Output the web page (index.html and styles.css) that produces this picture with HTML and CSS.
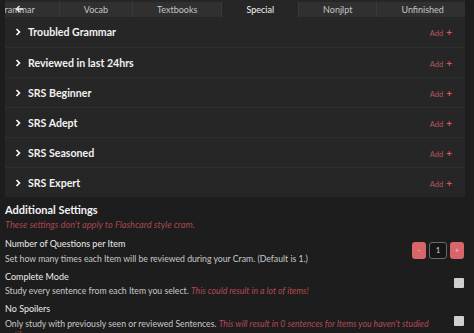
FILE: index.html
```html
<!DOCTYPE html>
<html>
<head>
<meta charset="utf-8">
<link rel="stylesheet" href="styles.css">
</head>
<body>
<div class="tabs">
  <div class="tab-track">
    <div class="tab">Grammar</div>
    <div class="tab">Vocab</div>
    <div class="tab">Textbooks</div>
    <div class="tab active">Special</div>
    <div class="tab">Nonjlpt</div>
    <div class="tab">Unfinished</div>
  </div>
  <span class="scroll-arrow">
    <svg width="9" height="8" viewBox="0 0 9 8"><path d="M8 4H1.5M4.5 1L1.5 4L4.5 7" fill="none" stroke="#e8e8e8" stroke-width="1.4"/></svg>
  </span>
</div>
<div class="panel">
  <div class="row"><svg class="chev" width="6" height="8" viewBox="0 0 6 8"><path d="M1.5 1L4.5 4L1.5 7" fill="none" stroke="#fff" stroke-width="1.6"/></svg><span class="label">Troubled Grammar</span><span class="add">Add <b>+</b></span></div>
  <div class="row"><svg class="chev" width="6" height="8" viewBox="0 0 6 8"><path d="M1.5 1L4.5 4L1.5 7" fill="none" stroke="#fff" stroke-width="1.6"/></svg><span class="label">Reviewed in last 24hrs</span><span class="add">Add <b>+</b></span></div>
  <div class="row"><svg class="chev" width="6" height="8" viewBox="0 0 6 8"><path d="M1.5 1L4.5 4L1.5 7" fill="none" stroke="#fff" stroke-width="1.6"/></svg><span class="label">SRS Beginner</span><span class="add">Add <b>+</b></span></div>
  <div class="row"><svg class="chev" width="6" height="8" viewBox="0 0 6 8"><path d="M1.5 1L4.5 4L1.5 7" fill="none" stroke="#fff" stroke-width="1.6"/></svg><span class="label">SRS Adept</span><span class="add">Add <b>+</b></span></div>
  <div class="row"><svg class="chev" width="6" height="8" viewBox="0 0 6 8"><path d="M1.5 1L4.5 4L1.5 7" fill="none" stroke="#fff" stroke-width="1.6"/></svg><span class="label">SRS Seasoned</span><span class="add">Add <b>+</b></span></div>
  <div class="row"><svg class="chev" width="6" height="8" viewBox="0 0 6 8"><path d="M1.5 1L4.5 4L1.5 7" fill="none" stroke="#fff" stroke-width="1.6"/></svg><span class="label">SRS Expert</span><span class="add">Add <b>+</b></span></div>
</div>
<div class="settings">
  <h2 class="settings-title">Additional Settings</h2>
  <p class="warn">These settings don't apply to Flashcard style cram.</p>
  <div class="setting">
    <div class="setting-text">
      <div class="setting-name">Number of Questions per Item</div>
      <div class="setting-desc">Set how many times each Item will be reviewed during your Cram. (Default is 1.)</div>
    </div>
    <div class="counter">
      <span class="cbtn">-</span>
      <span class="cval">1</span>
      <span class="cbtn">+</span>
    </div>
  </div>
  <div class="setting">
    <div class="setting-text">
      <div class="setting-name">Complete Mode</div>
      <div class="setting-desc">Study every sentence from each Item you select. <em>This could result in a lot of items!</em></div>
    </div>
    <span class="check"></span>
  </div>
  <div class="setting">
    <div class="setting-text">
      <div class="setting-name">No Spoilers</div>
      <div class="setting-desc">Only study with previously seen or reviewed Sentences. <em>This will result in 0 sentences for Items you haven't studied until</em></div>
    </div>
    <span class="check"></span>
  </div>
</div>
</body>
</html>
```
FILE: styles.css
```css
html, body {
  margin: 0;
  padding: 0;
}
body {
  background: #1d1d1d;
  font-family: Lato, "Liberation Sans", sans-serif;
  color: #e6e6e6;
  width: 474px;
  height: 333px;
  overflow: hidden;
}
.tabs {
  position: relative;
  margin-left: 5px;
  width: 460px;
  height: 17px;
  padding-top: 2px;
  box-sizing: border-box;
  overflow: hidden;
  background: #262626;
}
.tab-track {
  display: flex;
  margin-left: -31px;
}
.tab {
  flex: none;
  padding: 0 24px;
  height: 15px;
  line-height: 15px;
  font-size: 9px;
  color: #c4c4c4;
  background: #303030;
  border-right: 1px solid #3a3a3a;
}
.tab.active {
  background: #262626;
  color: #f4f4f4;
}
.scroll-arrow {
  position: absolute;
  left: 10px;
  top: 5px;
  line-height: 0;
}
.panel {
  margin-left: 5px;
  width: 460px;
  background: #262626;
}
.row {
  display: flex;
  align-items: center;
  height: 30px;
  box-sizing: border-box;
  border-top: 1px solid #2e2e2e;
  padding: 0 13px 0 10px;
}
.row:first-child {
  border-top: none;
}
.chev {
  flex: none;
  margin-right: 7px;
}
.label {
  flex: 1;
  font-size: 10.6px;
  font-weight: 700;
  color: #f2f2f2;
}
.add {
  font-size: 7.5px;
  color: #b4585c;
}
.add b {
  font-size: 10px;
  color: #d85a60;
  margin-left: 1px;
}
.settings {
  padding: 5px 10px 0 5px;
}
.settings-title {
  margin: 0;
  font-size: 11px;
  font-weight: 700;
  line-height: 15px;
  color: #f2f2f2;
}
.warn {
  margin: 1px 0 7px;
  font-size: 9.2px;
  font-style: italic;
  line-height: 13px;
  color: #a9474e;
}
.setting {
  display: flex;
  align-items: center;
  margin-bottom: 7px;
}
.setting-text {
  flex: 1;
}
.setting-name {
  font-size: 9px;
  line-height: 12px;
  color: #ececec;
}
.setting-desc {
  font-size: 8.7px;
  line-height: 11px;
  color: #c8c8c8;
  margin-top: 2.5px;
  max-width: 440px;
}
.setting-desc em {
  color: #b24a51;
}
.counter {
  display: flex;
  gap: 3px;
}
.cbtn {
  width: 14px;
  height: 17px;
  line-height: 17px;
  text-align: center;
  border-radius: 3px;
  background: #d8656a;
  color: #f4d4d4;
  font-size: 7px;
}
.cval {
  width: 18px;
  height: 17px;
  line-height: 15px;
  box-sizing: border-box;
  text-align: center;
  border: 1px solid #6a6a6a;
  border-radius: 3px;
  background: #161616;
  color: #e0e0e0;
  font-size: 7px;
}
.check {
  flex: none;
  width: 10px;
  height: 10px;
  background: #cfcfcf;
  border-radius: 1px;
}
```
